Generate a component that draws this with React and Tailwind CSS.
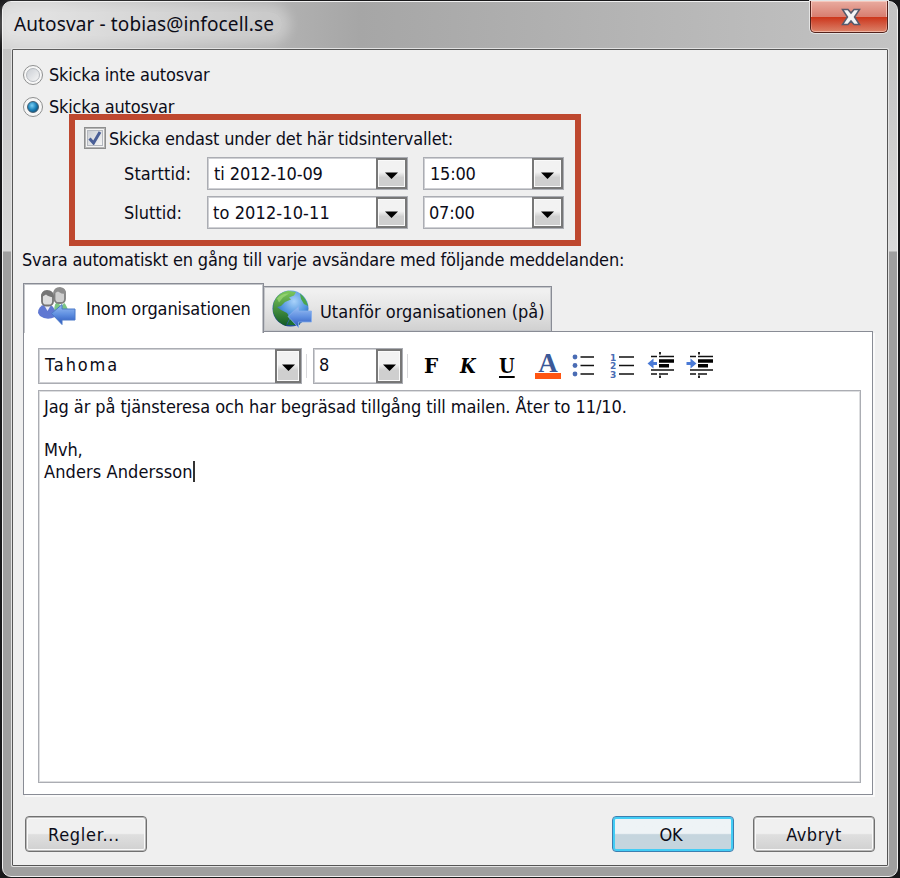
import React, { useState } from "react";

const ArrowGradient = () => (
  <linearGradient id="arrowFill" x1="0" y1="0" x2="0" y2="1">
    <stop offset="0" stopColor="#9cc0f4" />
    <stop offset="0.5" stopColor="#5f8fe0" />
    <stop offset="1" stopColor="#2a55bb" />
  </linearGradient>
);

const PeopleIcon = () => (
  <svg width="40" height="40" viewBox="0 0 40 40" className="shrink-0">
    <defs>
      <ArrowGradient />
    </defs>
    <path d="M16 25 Q16 14 22 14 Q29 15 30 25 Z" fill="#7cc584" />
    <path d="M20 15 L23 20 L27 15 Z" fill="#eef5ee" />
    <rect x="16.500" y="2" width="10.500" height="14" rx="4" fill="#cfcfcf" stroke="#808080" strokeWidth="1.800" />
    <path d="M15 7 Q15.500 0 22 0 Q28 0.500 28 7 Q23 7 20 4.500 Z" fill="#8e8e8e" />
    <path d="M0 26 Q0 19 7 17.500 L13 18 Q18 21 17 30 Q9 34 2 29 Z" fill="#6078d2" />
    <path d="M6 18 L9.500 24 L13 18 Z" fill="#e8ebfa" />
    <rect x="4" y="5" width="11" height="13.500" rx="4" fill="#dedede" stroke="#747474" strokeWidth="1.800" />
    <path d="M3 10.500 Q3 3 9 3 Q16 3 15.800 10.500 Q10 9.500 8 7.500 Z" fill="#757575" />
    <path d="M13.500 26.500 L24 17.500 V22 H37 V33 H24 V37.500 Z" fill="url(#arrowFill)" stroke="#4a78c8" />
  </svg>
);

const GlobeIcon = () => (
  <svg width="40" height="40" viewBox="0 0 40 40" className="shrink-0">
    <defs>
      <ArrowGradient />
      <radialGradient id="sea" cx="0.6" cy="0.3" r="0.75">
        <stop offset="0" stopColor="#a9d2fa" />
        <stop offset="0.5" stopColor="#4d92de" />
        <stop offset="1" stopColor="#143c80" />
      </radialGradient>
      <linearGradient id="land" x1="0" y1="0" x2="0" y2="1">
        <stop offset="0" stopColor="#7cc85c" />
        <stop offset="1" stopColor="#125a24" />
      </linearGradient>
    </defs>
    <circle cx="18.500" cy="18.500" r="18" fill="url(#sea)" />
    <path
      d="M1.500 13 Q5 3 16 0.800 L24 2 L22 5.500 L17 7.500 L19 9.500 L13 12 L9 16 L5 17 L9 20 L15 23 L18 28 L15 33 L14 36 Q4 32 1 22 Z"
      fill="url(#land)"
    />
    <path d="M28 3.500 Q34 8 36 16 L32 14 L29 9 Z" fill="#4aa64c" />
    <path d="M5 8.500 Q10 3 17 3.500 L11 7.500 L7 12.500 Z" fill="#a6e07e" opacity="0.6" />
    <path d="M15 35 H28 L26 32 L18 29 Z" fill="#1d7030" />
    <path d="M16 26.500 L26.500 16.500 V21 H39.500 V32 H26.500 V37.500 Z" fill="url(#arrowFill)" stroke="#86aeec" strokeWidth="0.800" />
  </svg>
);

const DropButton = ({ narrow }) => (
  <span
    className={`flex h-full shrink-0 items-center justify-center border-2 border-[#777] bg-linear-to-b from-[#f2f2f2] from-45% to-[#cfcfcf] to-65% shadow-[inset_0_0_0_1px_#fafafa] ${
      narrow ? "w-[26px]" : "w-[31px]"
    }`}
  >
    <svg width="13" height="7" viewBox="0 0 13 7" className="mt-[3px] shrink-0">
      <path d="M0 0.500 H13 L6.500 7 Z" fill="#000" />
    </svg>
  </span>
);

const Combo = ({ value, className, narrow }) => (
  <div className={`flex items-center border border-[#abadb3] bg-white shadow-[inset_0_0_0_1px_#cfd0d4] ${className}`}>
    <span className={narrow ? "grow pb-0.5 whitespace-nowrap" : "grow whitespace-nowrap"}>{value}</span>
    <DropButton narrow={narrow} />
  </div>
);

const Radio = ({ checked, onChange, label }) => (
  <label className="flex h-5 items-center">
    <input type="radio" className="sr-only" checked={checked} onChange={onChange} />
    <span className="flex size-5 items-center justify-center rounded-full border border-[#8e8f8f] bg-[#f6f6f6]">
      {checked ? (
        <span className="size-3 rounded-full border border-[#466072] bg-radial-[at_40%_35%] from-[#79d0f5] via-[#197fb8] to-[#0b3555]" />
      ) : (
        <span className="size-3.5 rounded-full border border-[#b5b9be] bg-linear-to-br from-[#cbcfd5] to-[#f6f6f6]" />
      )}
    </span>
    <span className="ml-[6px] whitespace-nowrap">{label}</span>
  </label>
);

const Button = ({ children, primary, className = "" }) => (
  <button
    className={`h-9 w-[122px] rounded-[4px] border pt-0.5 ${
      primary
        ? "border-[#3c7fb1] bg-linear-to-b from-[#eef3f6] from-48% to-[#c5d5de] to-52% shadow-[inset_0_0_0_2px_#43cdf5]"
        : "border-[#707070] bg-linear-to-b from-[#f0f0f0] from-48% via-[#dfdfdf] via-52% to-[#d0d0d0] shadow-[inset_0_0_0_1px_#b9b9b9,inset_0_0_0_2px_#fafafa]"
    } ${className}`}
  >
    {children}
  </button>
);

const BulletList = () => (
  <svg width="24" height="24" viewBox="0 0 24 24">
    <g fill="#4a6cb4">
      <circle cx="3" cy="3" r="2.400" />
      <circle cx="3" cy="11.500" r="2.400" />
      <circle cx="3" cy="20" r="2.400" />
    </g>
    <path d="M8.500 3 H22 M8.500 11.500 H22 M8.500 20 H22" stroke="#111" strokeWidth="1.700" />
  </svg>
);

const NumberList = () => (
  <svg width="25" height="26" viewBox="0 0 25 26">
    <g fill="#4a6cb4" fontFamily="DejaVu Sans" fontWeight="bold" fontSize="9" letterSpacing="0">
      <text x="0" y="7.500">1</text>
      <text x="0" y="16">2</text>
      <text x="0" y="24.500">3</text>
    </g>
    <path d="M9 4 H24 M9 12.500 H24 M9 21 H24" stroke="#111" strokeWidth="1.700" />
  </svg>
);

const Indent = ({ right }) => (
  <svg width="28" height="26" viewBox="0 0 28 26" className="-mt-0.5">
    <path d="M4 4.500 H10 M12 4.500 H27 M4 18 H27 M4 22 H10 M12 22 H21" stroke="#111" strokeWidth="1.700" />
    <path d="M12 9 H27 M12 13.800 H22" stroke="#000" strokeWidth="3.600" />
    <path d="M13 0 V2.500 M13 23.500 V26" stroke="#111" strokeWidth="1.800" />
    {right ? (
      <path d="M10.500 11.500 L4.500 6.500 V10 H0.500 V13 H4.500 V16.500 Z" fill="#4a7ad6" />
    ) : (
      <path d="M0.500 11.500 L6.500 6.500 V10 H10 V13 H6.500 V16.500 Z" fill="#4a7ad6" />
    )}
  </svg>
);

const Separator = () => <span className="h-6 w-px bg-[#d9d9dc]" />;

const App = () => {
  const [send, setSend] = useState(true);
  const [interval, setInterval] = useState(true);

  return (
    <div className="h-[878px] w-[900px] overflow-hidden bg-[#18181a] pt-[1px] pr-[2px] pb-[1px] pl-[2px] font-['DejaVu_Sans_Condensed','DejaVu_Sans',sans-serif] text-[18px] leading-[22px] tracking-[-0.2px] text-[#0c0c18]">
      {/* Window frame */}
      <div className="h-full rounded-[9px] border border-[#f0f0f0] bg-linear-to-b from-[#bebebe] via-[#dadada] via-[249px] to-[#9f9f9f] to-[250px] pr-2 pl-[9px]">
        <div className="-mr-2 -ml-[9px] flex h-[47px] items-start justify-between rounded-t-[8px] bg-linear-to-r from-[#d4d4d4] from-5% via-[#a6a6a6] via-40% to-[#c3c3c3]">
          <h1 className="mt-[10px] ml-[2px] rounded-full bg-white/30 pr-2 pl-[9px] font-['Noto_Sans',sans-serif] text-[19px] leading-[24px] tracking-[0.12px] whitespace-nowrap shadow-[0_0_12px_8px_rgba(255,255,255,0.3)]">
            Autosvar - tobias@infocell.se
          </h1>
          <button className="mr-[9px] -mt-px flex h-[32px] w-[78px] items-center justify-center rounded-b-[5px] border border-t-0 border-[#51211b] bg-linear-to-b from-[#e7a79b] from-5% via-[#d98072] via-48% to-[#dc8368] shadow-[inset_0_0_0_1px_rgba(255,220,210,0.6),0_0_0_1px_#e4e4e4]">
            <span className="flex h-full w-full items-center justify-center bg-linear-to-b from-transparent from-50% via-[#cc3418] via-51% to-transparent">
              <svg width="20" height="18" viewBox="0 0 20 18" className="ml-[3px]">
                <path
                  d="M1.500 1.500 H7 L10 5 L13 1.500 H18.500 L13.500 9 L18.500 16.500 H13 L10 13 L7 16.500 H1.500 L6.500 9 Z"
                  fill="#f4f4f4"
                  stroke="#565a6c"
                  strokeWidth="1.500"
                />
              </svg>
            </span>
          </button>
        </div>

        {/* Client area */}
        <div className="h-[817px] w-[876px] rounded-[1px] border border-[#555] bg-[#efefef] shadow-[0_0_0_1px_#e2e2e2]">
          <div className="pt-[15px] pl-[10px]">
            <Radio checked={!send} onChange={() => setSend(false)} label="Skicka inte autosvar" />
            <div className="mt-3">
              <Radio checked={send} onChange={() => setSend(true)} label="Skicka autosvar" />
            </div>
            <div className="-mt-[3px] ml-[46px] h-[132px] w-[512px] border-6 border-[#be482f] pt-[7px] pl-[9px]">
              <label className="flex h-[22px] items-center">
                <input type="checkbox" className="sr-only" checked={interval} onChange={() => setInterval(!interval)} />
                <span className="flex size-[22px] items-center justify-center border border-[#8e8f8f] bg-[#f4f4f4] shadow-[inset_0_0_0_1px_#b4b4b4]">
                  <span className="flex size-4 items-center justify-center border border-[#b4b8bf] bg-linear-to-br from-[#cbcfd5] to-[#f6f6f6]">
                    {interval && (
                      <svg width="14" height="14" viewBox="0 0 14 14">
                        <path d="M1.500 7.500 L5.500 12 L12 1" fill="none" stroke="#4a5f97" strokeWidth="3" />
                      </svg>
                    )}
                  </span>
                </span>
                <span className="mt-0.5 ml-[3px] tracking-[-0.17px] whitespace-nowrap">
                  Skicka endast under det här tidsintervallet:
                </span>
              </label>
              <div className="mt-2 flex items-center">
                <span className="w-[83px] pl-[40px] tracking-[0.1px]">Starttid:</span>
                <Combo value="ti 2012-10-09" className="ml-[40px] h-[33px] w-[201px] pl-[6px] tracking-[-0.1px]" />
                <Combo value="15:00" className="ml-[15px] h-[33px] w-[141px] pl-[6px]" />
              </div>
              <div className="mt-[6px] flex items-center">
                <span className="w-[83px] pl-[40px] tracking-[0px]">Sluttid:</span>
                <Combo value="to 2012-10-11" className="ml-[40px] h-[33px] w-[201px] pl-[5px] tracking-[0.1px]" />
                <Combo value="07:00" className="ml-[15px] h-[33px] w-[141px] pl-[5px]" />
              </div>
            </div>
          </div>

          <p className="mt-[3px] ml-[9px] tracking-[-0.16px] whitespace-nowrap">
            Svara automatiskt en gång till varje avsändare med följande meddelanden:
          </p>

          {/* Tabs */}
          <div className="relative mt-[12px] ml-[10px] flex h-[49px] items-end">
            <div className="relative -mb-[1px] flex h-[50px] w-[241px] border border-b-0 border-[#898c95] bg-white pt-[3px] pl-[14px] shadow-[inset_1px_1px_0_#c4c6ca,inset_-1px_0_0_#c4c6ca]">
              <PeopleIcon />
              <span className="mt-[11px] ml-2 tracking-[-0.1px] whitespace-nowrap">Inom organisationen</span>
            </div>
            <div className="-ml-px flex h-[46px] w-[289px] border border-[#898c95] bg-linear-to-b from-[#f0f0f0] from-10% via-[#e6e6e6] via-45% to-[#d0d0d0] pt-[3px] pl-[8px] shadow-[inset_0_0_0_1px_#c4c6ca]">
              <GlobeIcon />
              <span className="mt-[11px] ml-[8px] tracking-[0px] whitespace-nowrap">Utanför organisationen (på)</span>
            </div>
          </div>
          <div className="-mt-px ml-[10px] h-[464px] w-[850px] border border-[#898c95] bg-white pt-4 pl-[14px] shadow-[2px_2px_0_#fafafa]">
            <div className="flex h-[36px] items-center">
              <Combo narrow value="Tahoma" className="h-9 w-[264px] pl-[6px] tracking-[1.9px]" />
              <span className="w-[4px]" />
              <Separator />
              <Combo narrow value="8" className="ml-[6px] h-9 w-[90px] pl-[5px]" />
              <span className="w-[4px]" />
              <Separator />
              <div className="flex items-center tracking-normal text-black">
                <span className="ml-[16px] w-[36px] font-['DejaVu_Serif',serif] text-[20px] font-bold">F</span>
                <span className="w-[39px] font-['DejaVu_Serif_Condensed','DejaVu_Serif',serif] text-[20px] font-bold italic">K</span>
                <span className="w-[36px] font-['DejaVu_Serif_Condensed','DejaVu_Serif',serif] text-[20px] font-bold underline decoration-2 underline-offset-3">
                  U
                </span>
                <span className="flex w-[26px] flex-col items-center">
                  <span className="h-[20px] font-['Liberation_Serif',serif] text-[27px] leading-[20px] font-bold text-[#3b5998]">A</span>
                  <span className="h-[6px] w-full bg-[#ff5512]" />
                </span>
              </div>
              <div className="ml-[11px] flex items-center">
                <BulletList />
                <span className="w-[14px]" />
                <NumberList />
                <span className="w-[12px]" />
                <Indent />
                <span className="w-[11px]" />
                <Indent right />
              </div>
            </div>
            <div className="mt-[6px] h-[393px] w-[823px] border border-[#abadb3] bg-white pt-[5px] pl-[5px] leading-[21.5px] tracking-[-0.07px] shadow-[inset_0_0_0_1px_#dddee0]">
              <p className="whitespace-nowrap">
                Jag är på tjänsteresa och har begräsad tillgång till mailen. Åter to 11/10.
              </p>
              <p className="mt-[21.5px]">Mvh,</p>
              <p className="flex items-center tracking-[0.1px]">
                Anders Andersson
                <span className="h-[21px] w-[2px] bg-black/80" />
              </p>
            </div>
          </div>

          <div className="mt-[21px] flex pl-[12px]">
            <Button className="pr-1 tracking-[0.7px]">Regler...</Button>
            <span className="w-[465px]" />
            <Button primary className="pr-1">OK</Button>
            <span className="w-[19px]" />
            <Button className="tracking-[0.5px]">Avbryt</Button>
          </div>
        </div>
      </div>
    </div>
  );
};

export default App;
